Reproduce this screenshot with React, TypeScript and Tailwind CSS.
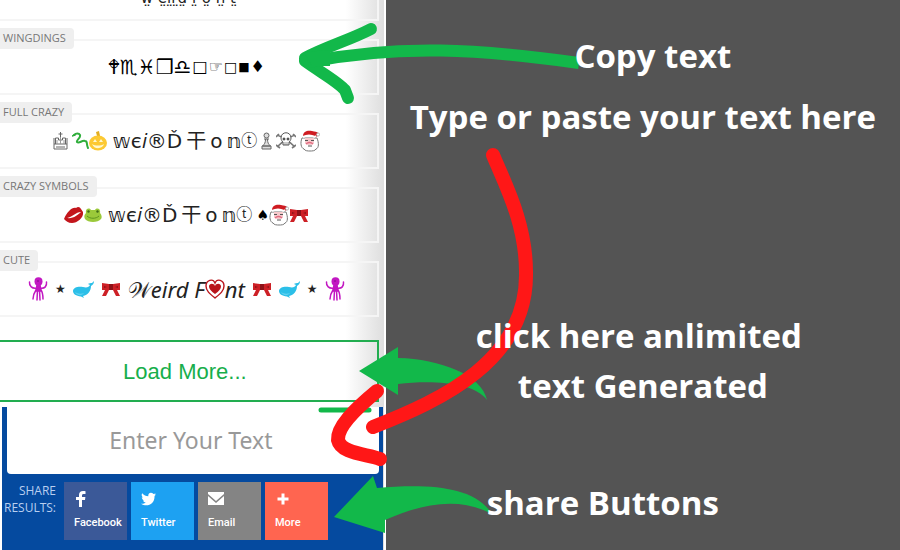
import React from "react";

type IconProps = { className?: string };

const Octopus = ({ className = "" }: IconProps) => (
  <svg viewBox="0 0 20 24" className={`h-6 w-5 shrink-0 ${className}`} fill="none" stroke="#c218c2" strokeWidth="1.5" strokeLinecap="round">
    <ellipse cx="10.500" cy="4.500" rx="4" ry="4.200" fill="#c218c2" stroke="none" />
    <path d="M9 8h3l1 6H8z" fill="#c218c2" />
    <path d="M9 11C4 12 1 9 1.500 5M12 11c5 1 7-2 6.500-6M8 13c-2 3-3 6-3 9M9.500 13L9 23M11.500 13l.5 10M13 13c2 3 2 6 2 9" />
    <circle cx="10" cy="4" r=".8" fill="#7b0b85" stroke="none" />
  </svg>
);

const Whale = ({ className = "" }: IconProps) => (
  <svg viewBox="0 0 21 17" className={`h-[17px] w-[21px] shrink-0 ${className}`} fill="#2bbfe8">
    <path d="M0 10c0-4 6-5 10-4 4 1 6 0 7-2l-2-1c1-1 3-1 4-1l2-2c0 2-1 4-3 5 0 5-3 9-8 10l1 2-3-1.500C3 15 0 13 0 10z" />
    <path d="M2 11c3 2 6 2 9 1-2 3-7 3-9-1z" fill="#5fd0f0" />
  </svg>
);

const Bow = ({ className = "" }: IconProps) => (
  <svg viewBox="0 0 20 15" className={`h-[15px] w-5 shrink-0 ${className}`} fill="#cd2026">
    <path d="M1 1l7 1h4l7-1v7h-3l3 6h-4l-3-6H8l-3 6H1l3-6H1z" />
    <path d="M8 2h4v6H8z" fill="#8e1218" />
    <path d="M3 4l3 1-3 1zM17 4l-3 1 3 1z" fill="#8e1218" />
  </svg>
);

const Santa = ({ className = "" }: IconProps) => (
  <svg viewBox="0 0 20 22" className={`h-[22px] w-5 shrink-0 ${className}`}>
    <path d="M2 8C0 13 1 18 4 19c1 2 4 2 6 2s5 0 6-2c3-1 3-6 1-11z" fill="#fff" stroke="#777" />
    <path d="M5 8h9v5c-2 3-7 3-9 0z" fill="#f6c8cb" />
    <path d="M5 10.500h3M11 10.500h3M8 16h4" stroke="#555" />
    <path d="M6 14c2-2 5-2 7 0" stroke="#e36c82" fill="none" strokeWidth="1.500" />
    <path d="M3 6c0-5 5-6 9-5 3 .6 5 1 6 2l-1 4-2-2v1z" fill="#cf1c22" />
    <path d="M3 7c4-2 8-2 12 0" stroke="#fff" strokeWidth="2" fill="none" />
    <circle cx="18" cy="4.500" r="1.600" fill="#fff" stroke="#888" strokeWidth=".6" />
  </svg>
);

const Crown = () => (
  <svg viewBox="0 0 15 19" className="h-[19px] w-[15px] shrink-0" fill="none" stroke="#666" strokeWidth="1">
    <path d="M7.500 0v5M5.500 2h4M2.500 12V6h3v2h4V6h3v6M1 6v6M14 6v6M1 12h13v5H1zM3 15h9" />
    <path d="M7.500 5v7M4 8v4M11 8v4" stroke="#999" />
  </svg>
);

const Snake = () => (
  <svg viewBox="0 0 17 18" className="h-[18px] w-[17px] shrink-0" fill="none" stroke="#2fae3b" strokeLinecap="round">
    <path d="M2 3c2-2 5-2 6 0 1 3-4 5-3 7 2 2 5-2 8-1 3 0 1 3 3 7" strokeWidth="2" />
    <path d="M0 4l3-1" strokeWidth="1.500" />
  </svg>
);

const Pumpkin = () => (
  <svg viewBox="0 0 18 20" className="h-5 w-[18px] shrink-0">
    <path d="M8 5L7 1l3-1 1 5" fill="#e3ae22" />
    <ellipse cx="9" cy="12" rx="9" ry="7.500" fill="#fcc933" />
    <path d="M4 11l2-3 2 3zM10 11l2-3 2 3zM3 13c3 2 9 2 12 0-1 5-10 6-12 0z" fill="#fff7cf" />
  </svg>
);

const Pawn = () => (
  <svg viewBox="0 0 11 18" className="h-[18px] w-[11px] shrink-0" fill="#ddd" stroke="#666">
    <circle cx="5.500" cy="3.500" r="2.500" />
    <path d="M3 7h5M4.500 7c0 4-1 5-3 7h8c-2-2-3-3-3-7M1 14h9v3H1z" />
  </svg>
);

const Skull = () => (
  <svg viewBox="0 0 20 18" className="h-[18px] w-5 shrink-0" fill="none" stroke="#777">
    <path d="M1 3c6 2 12 6 18 12M19 3C13 5 7 9 1 15M0 5l3-3M17 2l3 3M0 13l4 3M16 16l4-3" strokeWidth="1.600" />
    <path d="M5 6c0-7 10-7 10 0 0 2-1 3-2 4v3H7v-3C6 9 5 8 5 6z" fill="#fff" stroke="#555" />
    <path d="M7 6h2v2H7zM11 6h2v2h-2zM9 10v3M11 10v3" fill="#555" stroke="#555" strokeWidth=".6" />
  </svg>
);

const Lips = () => (
  <svg viewBox="0 0 20 18" className="h-[18px] w-5 shrink-0" fill="#c3161c">
    <path d="M0 13C3 6 8 1 12 2c2-2 4-1 5 1l2 3c1 6-6 11-11 11-4 0-6-2-8-4z" />
    <path d="M3 12C8 11 12 6 17 6c-3 3-8 7-14 6z" fill="#fff" />
  </svg>
);

const Frog = () => (
  <svg viewBox="0 0 18 14" className="h-[14px] w-[18px] shrink-0" fill="#9bc93a">
    <path d="M2 5C1 1 5-1 7 2h4c2-3 6-1 5 3 2 2 2 5 1 6-3 4-13 4-16 0-1-2-1-4 1-6z" />
    <circle cx="4.500" cy="3.500" r="1.200" fill="#3f6b17" />
    <circle cx="13.500" cy="3.500" r="1.200" fill="#3f6b17" />
    <path d="M3 8c3 3 9 3 12 0" stroke="#5f951f" fill="none" />
  </svg>
);

const Heart = () => (
  <svg viewBox="0 0 20 20" className="h-5 w-5 shrink-0" fill="#b9141a">
    <path d="M10 19C5 15 1 12 1 7c0-6 7-8 9-3 2-5 9-3 9 3 0 5-4 8-9 12z" fill="#fff" stroke="#b9141a" strokeWidth="1.400" />
    <path d="M10 15C6 12 4 10 4 7.500 4 4 9 4 10 7c1-3 6-3 6 .5 0 2.500-2 4.500-6 7.500z" />
  </svg>
);

const WeirdFont = () => (
  <span className="mr-1 ml-[6px] flex items-center gap-1 whitespace-nowrap">
    <span>𝕨є𝑖®Ď</span>
    <span>干</span>
    <span>o</span>
    <span className="flex items-center">𝕟<span className="text-[16px]">ⓣ</span></span>
  </span>
);

function FontCard({ label, children }: { label: string; children: React.ReactNode }) {
  return (
    <section className="flex flex-col">
      <h2 className="relative -mb-[10px] flex h-[21px] w-fit items-center rounded-r bg-[#efefef] pr-2 pl-[3px] font-['Open_Sans',sans-serif] text-[11px] text-[#777]">
        {label}
      </h2>
      <div className="mr-[5px] flex h-14 items-center justify-center border-y-2 border-r-2 border-[#f5f5f5] pr-1 font-['DejaVu_Sans','Noto_Sans_CJK_SC',sans-serif] text-[20px] text-[#222]">
        {children}
      </div>
    </section>
  );
}

const shares = [
  { name: "Facebook", bg: "bg-[#3b5998]", path: "M8 16V9h3l.4-3H8V4.500C8 3.500 8.500 3 9.700 3H11.500V.2C11 .1 10 0 9 0 6.500 0 5 1.500 5 4v2H2v3h3v7z" },
  { name: "Twitter", bg: "bg-[#1da1f2]", path: "M15 3.500l-1.600.5c.6-.4 1-.9 1.200-1.600l-2 .7C10 .7 7 2 7.300 5.300 5 5.200 2.800 4.200 1.200 2.300c-1 1.500-.4 3.400 1 4.200L.8 6.200c0 1.600 1 2.800 2.500 3.200H2c.4 1.200 1.500 2 2.800 2C3.500 12.500 2 13 0 12.800 7 17 14 12 13.500 5z" },
  { name: "Email", bg: "bg-[#848484]", path: "M0 1h16v2L8 10 0 3zM0 5l8 7 8-7v9H0z" },
  { name: "More", bg: "bg-[#ff6550]", path: "M6.500 2.500h3v4h4v3h-4v4h-3v-4h-4v-3h4z" },
];

export default function App() {
  return (
    <main className="relative flex min-h-screen overflow-hidden bg-[#545454]">
      <div className="flex w-3/7 flex-col border-r-2 border-white bg-white bg-linear-to-r from-white from-90% to-[#dedede]">
        <div className="mr-[5px] flex h-[21px] items-end justify-center border-r-2 border-b-2 border-[#f5f5f5] pb-[10px] font-['DejaVu_Sans',sans-serif] text-[15px] text-[#222]">
          w̤ e̤i̤r̤d̤ f̤ o̤ n̤ t̤
        </div>
        <div className="mt-[7px] flex flex-col gap-[7px]">
          <FontCard label="WINGDINGS">
            <span className="flex items-center gap-px text-black">
              <span>🕈♏♓❒♎</span>
              <span className="text-[16px]">□</span>
              <span className="text-[16px]">☞</span>
              <span className="text-[14px]">□</span>
              <span className="text-[12px]">■</span>
              <span className="text-[16px]">♦</span>
            </span>
          </FontCard>
          <FontCard label="FULL CRAZY">
            <span className="mr-1"><Crown /></span><Snake /><Pumpkin />
            <WeirdFont />
            <Pawn /><span className="mx-1"><Skull /></span><Santa />
          </FontCard>
          <FontCard label="CRAZY SYMBOLS">
            <Lips /><Frog />
            <WeirdFont />
            <span className="text-[14px] text-black">♠</span><Santa /><Bow />
          </FontCard>
          <FontCard label="CUTE">
            <div className="flex items-center gap-[7px]">
              <Octopus /><span className="text-[12px]">★</span><Whale /><Bow />
              <span className="flex items-center font-['Noto_Sans','DejaVu_Sans',sans-serif] text-[22px] italic">
                <span><span className="not-italic">𝒲</span>eird F</span><Heart /><span>nt</span>
              </span>
              <Bow /><Whale /><span className="text-[12px]">★</span><Octopus />
            </div>
          </FontCard>
        </div>
        <button type="button" className="mt-[23px] mr-[5px] h-[62px] border-y-2 border-r-2 border-[#22ad50] pr-[7px] font-['Liberation_Sans',sans-serif] text-[22px] text-[#17ae4b]">
          Load More...
        </button>
        <div className="mt-[5px] mr-px ml-[2px] flex flex-1 flex-col bg-[#054a9f]">
          <input aria-label="Enter Your Text" placeholder="Enter Your Text" className="mr-1 ml-[5px] h-[67px] rounded-b bg-white pr-1 pb-[2px] text-center font-['Noto_Sans',sans-serif] text-[23px] outline-none placeholder:text-[#999]" />
          <div className="mt-2 flex gap-1">
            <p className="w-[58px] pr-1 text-right font-['Open_Sans',sans-serif] text-[12px] leading-[17px] text-[#b9cff0]">SHARE RESULTS:</p>
            {shares.map((s) => (
              <button key={s.name} type="button" className={`flex h-[58px] w-[63px] flex-col items-start gap-2 px-[10px] pt-[9px] font-['Roboto',sans-serif] text-[11px] font-medium text-white ${s.bg}`}>
                <svg viewBox="0 0 16 16" className="h-4 w-4" fill="currentColor"><path d={s.path} /></svg>
                {s.name}
              </button>
            ))}
          </div>
        </div>
      </div>

      <svg viewBox="0 0 900 550" className="pointer-events-none absolute inset-0 h-full w-full" fill="none" strokeLinecap="round" strokeLinejoin="round">
        <g stroke="#12b84a">
          <path d="M371 29C350 40 325 47 305 58" strokeWidth="12" />
          <path d="M305 61C320 72 337 81 345 90L348 98" strokeWidth="12" />
          <path d="M308 62C400 44 480 49 579 63" strokeWidth="12" strokeLinecap="butt" />
        </g>
        <g fill="#12b84a">
          <path d="M304 52L330 50V66H312z" />
          <path d="M359 371L398 347V358C440 359 482 375 487 400C474 382 432 380 398 384V395Z" />
          <path d="M334 517L373 476L377 488C425 484 474 485 492 514C455 494 415 507 385 520V533Z" />
        </g>
        <path d="M321 410H369" stroke="#12b84a" strokeWidth="5" />
        <g stroke="#ff1717">
          <path d="M493 155C505 184 526 223 526 272C528 360 442 400 373 427" strokeWidth="14" />
          <path d="M377 391C354 410 337 427 338 440C341 454 368 454 380 459" strokeWidth="14" />
        </g>
      </svg>

      <div className="relative flex flex-1 flex-col items-center text-center font-['Open_Sans',sans-serif] text-[33px] leading-[50px] font-bold text-white">
        <p className="mt-[31px] pl-5">Copy text</p>
        <p className="mt-[11px] whitespace-nowrap">Type or paste your text here</p>
        <p className="mt-[169px] pr-2">click here anlimited</p>
        <p>text Generated</p>
        <p className="mt-[67px] pr-20">share Buttons</p>
      </div>
    </main>
  );
}
